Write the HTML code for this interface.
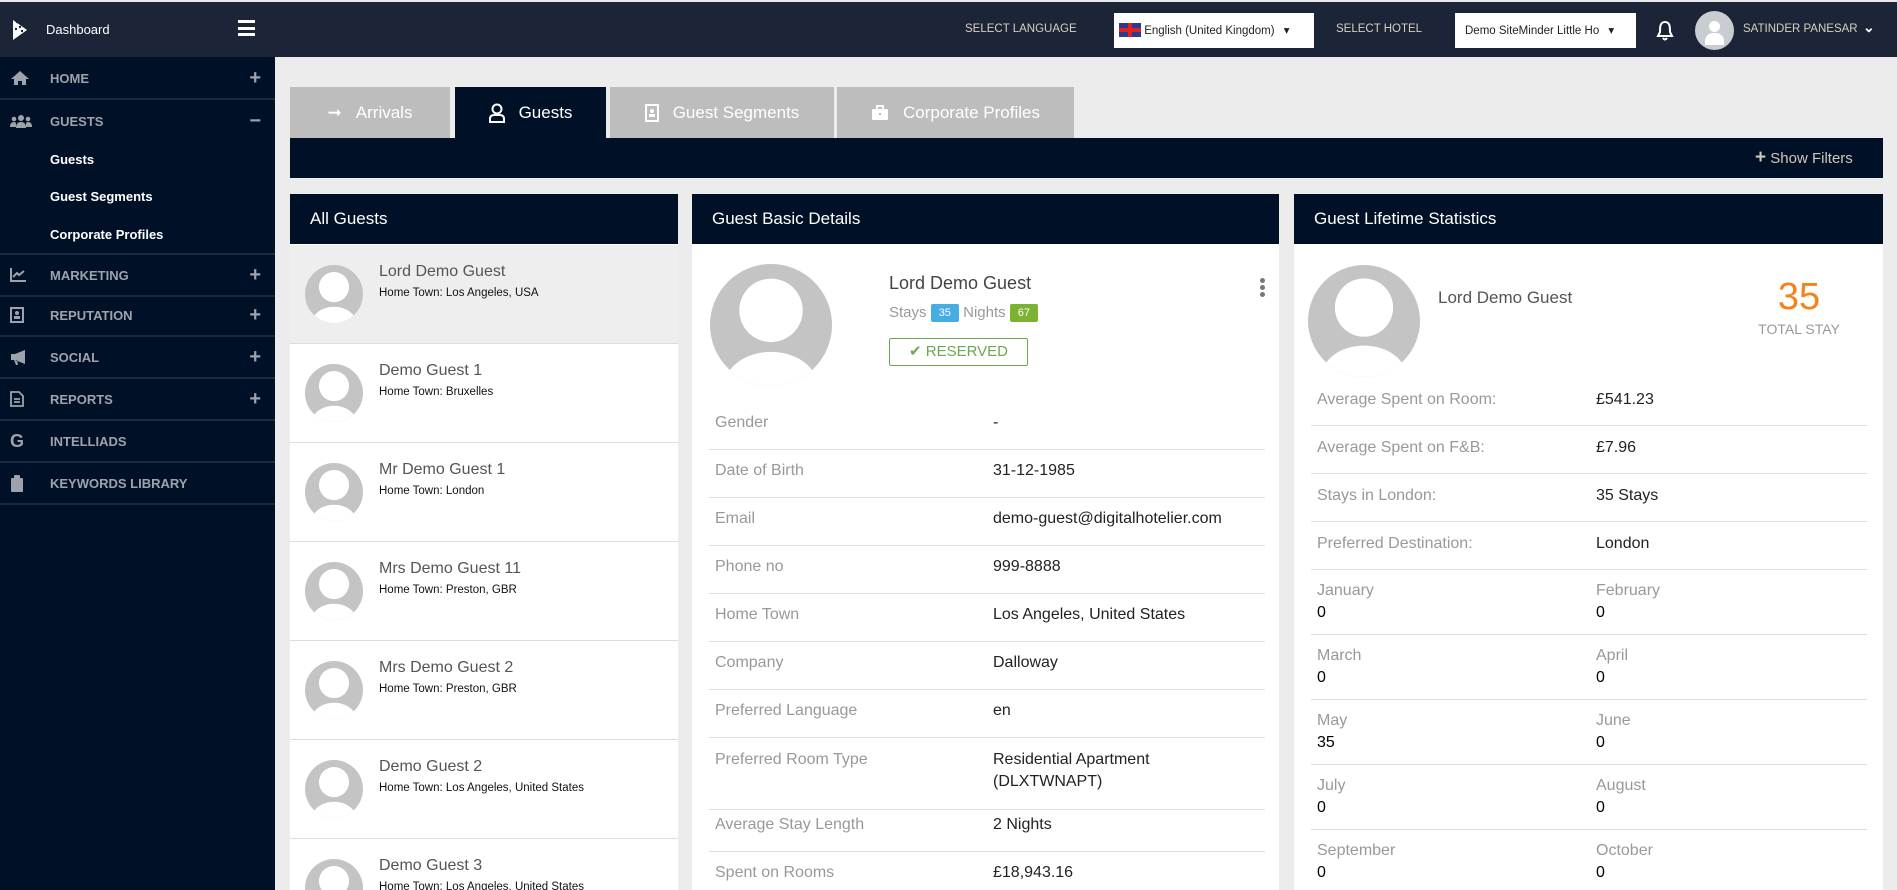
<!DOCTYPE html>
<html style="height:890px;overflow:hidden"><head><meta charset="utf-8"><style>
*{box-sizing:border-box;margin:0;padding:0}
body{width:1897px;height:890px;overflow:hidden;background:#ececec;font-family:"Liberation Sans",sans-serif;position:relative}
.abs{position:absolute}
#top{left:0;top:0;width:1897px;height:57px;background:#1b2537;border-top:2px solid #e8e8e8}
#side{left:0;top:57px;width:275px;height:833px;background:#001127}
.nav{position:absolute;left:0;width:275px;height:42px;display:flex;align-items:center;color:#9ea3ab;font-size:13px;font-weight:bold;border-bottom:2px solid #1e2a3c}
.nav .ic{width:50px;padding-left:10px;display:flex;align-items:center}
.nav .pl{position:absolute;right:14px;font-size:20px;font-weight:bold;color:#9ea3ab}
.sub{position:absolute;left:50px;color:#fff;font-size:13px;font-weight:bold}
.tab{position:absolute;top:87px;height:51px;background:#bdbdbd;color:#fff;font-size:17px;display:flex;align-items:center;justify-content:center;gap:14px}
.panel{position:absolute;top:194px;background:#fff;height:696px;overflow:hidden}
.ph{height:50px;background:#001127;color:#fff;font-size:17px;padding-left:20px;display:flex;align-items:center}
.li{position:absolute;left:0;width:388px;height:99px;border-bottom:1px solid #ddd}
.li .nm{position:absolute;left:89px;top:18px;font-size:16px;color:#555}
.li .ht{position:absolute;left:89px;top:42px;font-size:11.5px;color:#111}
.li svg{position:absolute;left:15px;top:20px}
.row{position:absolute;left:17px;width:556px;border-bottom:1px solid #ddd;font-size:16px;line-height:20px;padding:12px 6px 16px}
.row .l{position:absolute;left:6px;color:#999}
.row .v{margin-left:278px;color:#222}
.srow{position:absolute;left:17px;width:556px;border-bottom:1px solid #ddd;font-size:16px;line-height:20px;padding:12px 6px 16px;height:48px}
.srow .l{position:absolute;left:6px;color:#999}
.srow .v{position:absolute;left:285px;color:#222}
.mrow{position:absolute;left:17px;width:556px;border-bottom:1px solid #ddd;font-size:16px;line-height:22px;padding:10px 6px 0;height:65px}
.mrow div{position:absolute;top:10px}
.mrow .g{color:#999}
</style></head><body>
<div id="top" class="abs">
 <svg class="abs" style="left:12px;top:17px" width="16" height="22" viewBox="0 0 16 22"><path d="M1 1 L15 11 L1 21Z" fill="#fff"/><circle cx="5" cy="3" r="1.2" fill="#1b2537"/><circle cx="8" cy="8" r="1.2" fill="#1b2537"/><circle cx="4" cy="10" r="1.2" fill="#1b2537"/><circle cx="10" cy="12" r="1.2" fill="#1b2537"/></svg>
 <div class="abs" style="left:46px;top:20px;color:#fff;font-size:13px">Dashboard</div>
 <div class="abs" style="left:238px;top:18px;width:17px;height:16px;border-top:3px solid #fff;border-bottom:3px solid #fff"><div style="margin-top:3.5px;height:3px;background:#fff"></div></div>
 <div class="abs" style="left:965px;top:21px;color:#d8cfc0;font-size:11.5px">SELECT LANGUAGE</div>
 <div class="abs" style="left:1114px;top:11px;width:200px;height:35px;background:#fff;font-size:11.5px;color:#222;padding:10px 0 0 5px"><span style="display:inline-block;width:22px;height:14px;background:#2b3a8c;vertical-align:-3px;position:relative;overflow:hidden"><span style="position:absolute;left:0;top:5px;width:22px;height:4px;background:#d22"></span><span style="position:absolute;left:9px;top:0;width:4px;height:14px;background:#d22"></span></span> English (United Kingdom) <span style="margin-left:6px">▾</span></div>
 <div class="abs" style="left:1336px;top:21px;color:#d8cfc0;font-size:11.5px">SELECT HOTEL</div>
 <div class="abs" style="left:1455px;top:11px;width:181px;height:35px;background:#fff;font-size:11.5px;color:#222;padding:10px 0 0 10px">Demo SiteMinder Little Ho <span style="margin-left:6px">▾</span></div>
 <svg class="abs" style="left:1656px;top:18px" width="18" height="22" viewBox="0 0 18 22"><path d="M9 2 C4 2 4 7 4 12 L2 16 H16 L14 12 C14 7 14 2 9 2Z M7 18 Q9 21 11 18" fill="none" stroke="#fff" stroke-width="2"/></svg>
 <div class="abs" style="left:1695px;top:9px;width:39px;height:39px;border-radius:50%;background:#c9ccd1;overflow:hidden"><div style="position:absolute;left:14px;top:10px;width:11px;height:11px;border-radius:50%;background:#fff"></div><div style="position:absolute;left:10px;top:22px;width:19px;height:12px;border-radius:8px 8px 0 0;background:#fff"></div></div>
 <div class="abs" style="left:1743px;top:21px;color:#d8cfc0;font-size:11.5px">SATINDER PANESAR</div>
 <div class="abs" style="left:1863px;top:17px;color:#fff;font-size:14px;font-weight:bold">⌄</div>
</div>
<div id="side" class="abs">
 <div class="nav" style="top:1px"><span class="ic"><svg width="20" height="16" viewBox="0 0 20 16"><path d="M10 1 L1 9 H4 V15 H8 V11 H12 V15 H16 V9 H19Z" fill="#9ea3ab"/></svg></span>HOME<span class="pl">+</span></div>
 <div class="nav" style="top:43px;border-bottom:none"><span class="ic"><svg width="22" height="14" viewBox="0 0 22 14"><circle cx="11" cy="4" r="3" fill="#9ea3ab"/><circle cx="4" cy="5" r="2.3" fill="#9ea3ab"/><circle cx="18" cy="5" r="2.3" fill="#9ea3ab"/><path d="M6 14 Q6 8 11 8 Q16 8 16 14Z M0 13 Q0 8 4 8 Q6 8 6 10 V13Z M22 13 Q22 8 18 8 Q16 8 16 10 V13Z" fill="#9ea3ab"/></svg></span>GUESTS<span class="pl">−</span></div>
 <div class="sub" style="top:95px">Guests</div>
 <div class="sub" style="top:132px">Guest Segments</div>
 <div class="sub" style="top:170px">Corporate Profiles</div>
 <div class="nav" style="top:196px;border-top:2px solid #1e2a3c;height:44px"><span class="ic"><svg width="16" height="14" viewBox="0 0 16 14"><path d="M1 0 V13 H16 M3 9 L7 5 L9 7 L14 3" fill="none" stroke="#9ea3ab" stroke-width="2"/></svg></span>MARKETING<span class="pl">+</span></div>
 <div class="nav" style="top:238px"><span class="ic"><svg width="14" height="16" viewBox="0 0 14 16"><rect x="1" y="1" width="12" height="14" fill="none" stroke="#9ea3ab" stroke-width="2"/><circle cx="7" cy="6" r="2" fill="#9ea3ab"/><rect x="4" y="9" width="6" height="3" fill="#9ea3ab"/></svg></span>REPUTATION<span class="pl">+</span></div>
 <div class="nav" style="top:280px"><span class="ic"><svg width="18" height="16" viewBox="0 0 18 16"><path d="M1 5 H5 L15 1 V15 L5 11 H1Z M4 11 L6 16 H8 L7 11" fill="#9ea3ab"/></svg></span>SOCIAL<span class="pl">+</span></div>
 <div class="nav" style="top:322px"><span class="ic"><svg width="14" height="16" viewBox="0 0 14 16"><path d="M1 1 H9 L13 5 V15 H1Z M4 8 H10 M4 11 H10" fill="none" stroke="#9ea3ab" stroke-width="1.8"/></svg></span>REPORTS<span class="pl">+</span></div>
 <div class="nav" style="top:364px"><span class="ic" style="font-size:18px;color:#9ea3ab">G</span>INTELLIADS</div>
 <div class="nav" style="top:406px"><span class="ic"><svg width="14" height="17" viewBox="0 0 14 17"><rect x="1" y="3" width="12" height="14" rx="1" fill="#9ea3ab"/><rect x="4" y="0" width="6" height="5" rx="1" fill="#9ea3ab"/></svg></span>KEYWORDS LIBRARY</div>
</div>

<div class="tab" style="left:290px;width:160px"><span>➞</span>Arrivals</div>
<div class="tab" style="left:455px;width:151px;background:#001127"><svg width="16" height="20" viewBox="0 0 16 20"><circle cx="8" cy="6" r="4.5" fill="none" stroke="#fff" stroke-width="2"/><path d="M1 19 V16 Q1 12 5 12 H11 Q15 12 15 16 V19Z" fill="none" stroke="#fff" stroke-width="2"/></svg>Guests</div>
<div class="tab" style="left:610px;width:224px"><svg width="14" height="18" viewBox="0 0 14 18"><rect x="1" y="1" width="12" height="16" fill="none" stroke="#fff" stroke-width="2"/><circle cx="7" cy="7" r="2" fill="#fff"/><rect x="4" y="10" width="6" height="3" fill="#fff"/></svg>Guest Segments</div>
<div class="tab" style="left:837px;width:237px"><svg width="18" height="16" viewBox="0 0 18 16"><rect x="1" y="4" width="16" height="11" rx="1" fill="#fff"/><rect x="6" y="1" width="6" height="4" fill="none" stroke="#fff" stroke-width="2"/><rect x="8" y="8" width="2" height="2" fill="#bdbdbd"/></svg>Corporate Profiles</div>
<div class="abs" style="left:290px;top:138px;width:1593px;height:40px;background:#001127"></div>
<div class="abs" style="left:1755px;top:147px;color:#d0c8b8;font-size:15px"><b style="font-size:19px">+</b> Show Filters</div>

<svg width="0" height="0" style="position:absolute"><defs><clipPath id="c"><circle cx="50" cy="50" r="50"/></clipPath></defs></svg>

<div class="panel" style="left:290px;width:388px">
 <div class="ph">All Guests</div>
 <div class="li" style="top:51px;background:#eee"><svg width="58" height="58" viewBox="0 0 100 100"><g clip-path="url(#c)"><rect width="100" height="100" fill="#c4c4c4"/><circle cx="50" cy="38" r="26" fill="#fff"/><ellipse cx="50" cy="100" rx="38" ry="28" fill="#fff"/></g></svg><div class="nm">Lord Demo Guest</div><div class="ht">Home Town: Los Angeles, USA</div></div>
 <div class="li" style="top:150px"><svg width="58" height="58" viewBox="0 0 100 100"><g clip-path="url(#c)"><rect width="100" height="100" fill="#c4c4c4"/><circle cx="50" cy="38" r="26" fill="#fff"/><ellipse cx="50" cy="100" rx="38" ry="28" fill="#fff"/></g></svg><div class="nm">Demo Guest 1</div><div class="ht">Home Town: Bruxelles</div></div>
 <div class="li" style="top:249px"><svg width="58" height="58" viewBox="0 0 100 100"><g clip-path="url(#c)"><rect width="100" height="100" fill="#c4c4c4"/><circle cx="50" cy="38" r="26" fill="#fff"/><ellipse cx="50" cy="100" rx="38" ry="28" fill="#fff"/></g></svg><div class="nm">Mr Demo Guest 1</div><div class="ht">Home Town: London</div></div>
 <div class="li" style="top:348px"><svg width="58" height="58" viewBox="0 0 100 100"><g clip-path="url(#c)"><rect width="100" height="100" fill="#c4c4c4"/><circle cx="50" cy="38" r="26" fill="#fff"/><ellipse cx="50" cy="100" rx="38" ry="28" fill="#fff"/></g></svg><div class="nm">Mrs Demo Guest 11</div><div class="ht">Home Town: Preston, GBR</div></div>
 <div class="li" style="top:447px"><svg width="58" height="58" viewBox="0 0 100 100"><g clip-path="url(#c)"><rect width="100" height="100" fill="#c4c4c4"/><circle cx="50" cy="38" r="26" fill="#fff"/><ellipse cx="50" cy="100" rx="38" ry="28" fill="#fff"/></g></svg><div class="nm">Mrs Demo Guest 2</div><div class="ht">Home Town: Preston, GBR</div></div>
 <div class="li" style="top:546px"><svg width="58" height="58" viewBox="0 0 100 100"><g clip-path="url(#c)"><rect width="100" height="100" fill="#c4c4c4"/><circle cx="50" cy="38" r="26" fill="#fff"/><ellipse cx="50" cy="100" rx="38" ry="28" fill="#fff"/></g></svg><div class="nm">Demo Guest 2</div><div class="ht">Home Town: Los Angeles, United States</div></div>
 <div class="li" style="top:645px"><svg width="58" height="58" viewBox="0 0 100 100"><g clip-path="url(#c)"><rect width="100" height="100" fill="#c4c4c4"/><circle cx="50" cy="38" r="26" fill="#fff"/><ellipse cx="50" cy="100" rx="38" ry="28" fill="#fff"/></g></svg><div class="nm">Demo Guest 3</div><div class="ht">Home Town: Los Angeles, United States</div></div>
</div>

<div class="panel" style="left:692px;width:587px">
 <div class="ph">Guest Basic Details</div>
 <svg class="abs" style="left:18px;top:70px" width="122" height="122" viewBox="0 0 100 100"><g clip-path="url(#c)"><rect width="100" height="100" fill="#c4c4c4"/><circle cx="50" cy="38" r="26" fill="#fff"/><ellipse cx="50" cy="100" rx="38" ry="28" fill="#fff"/></g></svg>
 <div class="abs" style="left:197px;top:79px;font-size:18px;color:#444">Lord Demo Guest</div>
 <div class="abs" style="left:197px;top:110px;font-size:15px;color:#999">Stays <span style="display:inline-block;background:#45ade2;color:#fff;font-size:11px;padding:3px 8px;border-radius:2px;vertical-align:1px">35</span> Nights <span style="display:inline-block;background:#7cb232;color:#fff;font-size:11px;padding:3px 8px;border-radius:2px;vertical-align:1px">67</span></div>
 <div class="abs" style="left:197px;top:144px;width:139px;height:28px;border:1px solid #6aa84f;border-radius:2px;color:#6aa84f;font-size:15px;text-align:center;line-height:26px">✔ RESERVED</div>
 <div class="abs" style="left:568px;top:84px;width:5px"><div style="width:5px;height:5px;border-radius:50%;background:#777;margin-bottom:2px"></div><div style="width:5px;height:5px;border-radius:50%;background:#777;margin-bottom:2px"></div><div style="width:5px;height:5px;border-radius:50%;background:#777"></div></div>
 <div class="row" style="top:207px"><span class="l">Gender</span><div class="v">-</div></div>
 <div class="row" style="top:255px"><span class="l">Date of Birth</span><div class="v">31-12-1985</div></div>
 <div class="row" style="top:303px"><span class="l">Email</span><div class="v">demo-guest@digitalhotelier.com</div></div>
 <div class="row" style="top:351px"><span class="l">Phone no</span><div class="v">999-8888</div></div>
 <div class="row" style="top:399px"><span class="l">Home Town</span><div class="v">Los Angeles, United States</div></div>
 <div class="row" style="top:447px"><span class="l">Company</span><div class="v">Dalloway</div></div>
 <div class="row" style="top:495px"><span class="l">Preferred Language</span><div class="v">en</div></div>
 <div class="row" style="top:543px;line-height:22px"><span class="l">Preferred Room Type</span><div class="v">Residential Apartment<br>(DLXTWNAPT)</div></div>
 <div class="row" style="top:609px"><span class="l">Average Stay Length</span><div class="v">2 Nights</div></div>
 <div class="row" style="top:657px"><span class="l">Spent on Rooms</span><div class="v">£18,943.16</div></div>
</div>

<div class="panel" style="left:1294px;width:589px">
 <div class="ph">Guest Lifetime Statistics</div>
 <svg class="abs" style="left:14px;top:71px" width="112" height="112" viewBox="0 0 100 100"><g clip-path="url(#c)"><rect width="100" height="100" fill="#c4c4c4"/><circle cx="50" cy="38" r="26" fill="#fff"/><ellipse cx="50" cy="100" rx="38" ry="28" fill="#fff"/></g></svg>
 <div class="abs" style="left:144px;top:94px;font-size:17px;color:#555">Lord Demo Guest</div>
 <div class="abs" style="left:440px;top:82px;width:130px;text-align:center;font-size:38px;color:#f7821b;font-weight:300">35</div>
 <div class="abs" style="left:440px;top:127px;width:130px;text-align:center;font-size:14px;color:#999">TOTAL STAY</div>
 <div class="srow" style="top:184px"><span class="l">Average Spent on Room:</span><span class="v">£541.23</span></div>
 <div class="srow" style="top:232px"><span class="l">Average Spent on F&amp;B:</span><span class="v">£7.96</span></div>
 <div class="srow" style="top:280px"><span class="l">Stays in London:</span><span class="v">35 Stays</span></div>
 <div class="srow" style="top:328px"><span class="l">Preferred Destination:</span><span class="v">London</span></div>
 <div class="mrow" style="top:376px"><div style="left:6px"><span class="g">January</span><br>0</div><div style="left:285px"><span class="g">February</span><br>0</div></div>
 <div class="mrow" style="top:441px"><div style="left:6px"><span class="g">March</span><br>0</div><div style="left:285px"><span class="g">April</span><br>0</div></div>
 <div class="mrow" style="top:506px"><div style="left:6px"><span class="g">May</span><br>35</div><div style="left:285px"><span class="g">June</span><br>0</div></div>
 <div class="mrow" style="top:571px"><div style="left:6px"><span class="g">July</span><br>0</div><div style="left:285px"><span class="g">August</span><br>0</div></div>
 <div class="mrow" style="top:636px"><div style="left:6px"><span class="g">September</span><br>0</div><div style="left:285px"><span class="g">October</span><br>0</div></div>
</div>
</body></html>
